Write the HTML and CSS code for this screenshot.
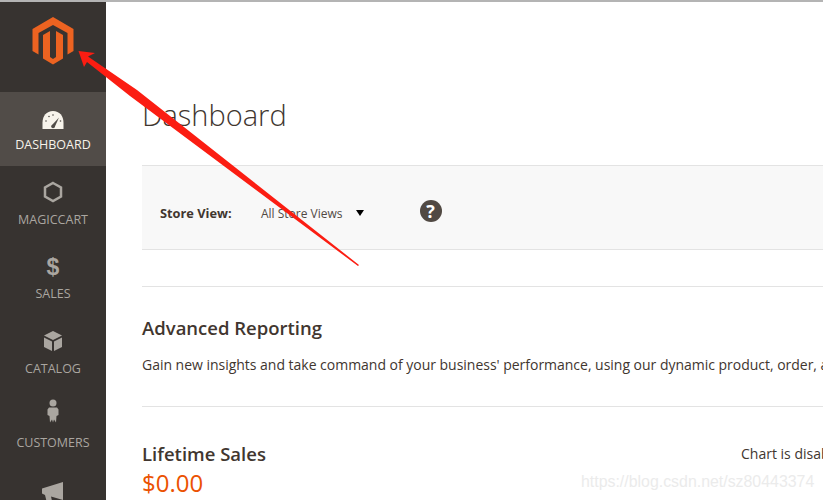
FILE: index.html
```html
<!DOCTYPE html>
<html lang="en">
<head>
<meta charset="utf-8">
<title>Dashboard</title>
<link rel="stylesheet" href="styles.css">
</head>
<body>
<div class="page">
  <aside class="sidebar">
    <div class="logo">
      <svg width="46" height="52" viewBox="30 15 46 52"><path class="logo-mark" d="M53 17 73.500 29V51L67.500 54.500V33L53 25 38.500 33V54.500L32.500 51V29Z"/><path class="logo-mark" d="M43 35 50 31V57L53 59 56 57V31L63 35V58.500L53 64.500 43 58.500Z"/></svg>
    </div>
    <nav class="nav">
      <a class="nav-item active">
        <svg class="nav-icon" width="24" height="24" viewBox="0 0 24 24"><path d="M12 5C5.500 5 1.500 10 1.500 16.500V23H22.500V16.500C22.500 10 18.500 5 12 5Z"/><path class="needle" d="M18 11.500 10.500 19.500 13.500 21.500Z"/><circle class="needle" cx="12" cy="20.500" r="1.800"/><circle class="needle" cx="5" cy="15" r=".8"/><circle class="needle" cx="8" cy="10.500" r=".8"/><circle class="needle" cx="12" cy="9" r=".8"/><circle class="needle" cx="19.500" cy="15" r=".8"/></svg>
        <span>Dashboard</span>
      </a>
      <a class="nav-item">
        <svg class="nav-icon" width="24" height="24" viewBox="0 0 24 24"><path class="hex" d="M12 3 20 7.500V16.500L12 21 4 16.500V7.500Z"/></svg>
        <span>MagicCart</span>
      </a>
      <a class="nav-item">
        <svg class="nav-icon" width="24" height="24" viewBox="0 0 24 24"><text class="dollar" x="12" y="20" text-anchor="middle">$</text></svg>
        <span>Sales</span>
      </a>
      <a class="nav-item">
        <svg class="nav-icon" width="24" height="24" viewBox="0 0 24 24"><path d="M12 2 21 6.500 12 11 3 6.500Z"/><path d="M3 8.500 11 12.500V22L3 18Z"/><path d="M21 8.500 13 12.500V22L21 18Z"/></svg>
        <span>Catalog</span>
      </a>
      <a class="nav-item">
        <svg class="nav-icon shift-up" width="24" height="24" viewBox="0 5.600 24 24"><circle cx="12" cy="4.500" r="3.500"/><path d="M8 9H16L17.500 11V16.500L15.500 17.500 15 24 13 21 12 24 11 21 9 24 8.500 17.500 6.500 16.500V11Z"/></svg>
        <span>Customers</span>
      </a>
      <a class="nav-item">
        <svg class="nav-icon" width="24" height="24" viewBox="0 -2 24 24"><path d="M22 2V20L10 16.500 11.500 23H6L4 15 1 13.500V8.500Z"/></svg>
        <span>Marketing</span>
      </a>
    </nav>
  </aside>
  <main class="main">
    <h1 class="title">Dashboard</h1>
    <section class="store-bar">
      <strong class="store-label">Store View:</strong>
      <span class="store-value">All Store Views</span>
      <span class="caret"></span>
      <span class="help">?</span>
    </section>
    <hr class="rule rule-report">
    <section class="report">
      <h2 class="heading">Advanced Reporting</h2>
      <p class="report-text">Gain new insights and take command of your business' performance, using our dynamic product, order, and customer reports tailored to your customer data.</p>
    </section>
    <hr class="rule">
    <section class="sales">
      <div class="sales-total">
        <h2 class="heading">Lifetime Sales</h2>
        <div class="amount">$0.00</div>
      </div>
      <p class="chart-note">Chart is disabled. To enable the chart, click here.</p>
    </section>
  </main>
</div>
<div class="watermark">https://blog.csdn.net/sz80443374</div>
<svg class="arrow" width="823" height="500" viewBox="0 0 823 500"><path d="M78.500 51 95 53 88 56.500 137 90 359 265 358 266 130 96 87 62 84 67Z"/></svg>
</body>
</html>
```

FILE: styles.css
```css
* { box-sizing: border-box; }
html, body { margin: 0; height: 100%; overflow: hidden; background: #fff; }
body { font-family: "Open Sans", sans-serif; color: #41362f; border-top: 2px solid #b4b4b4; }

.page { display: flex; height: 498px; overflow: hidden; }

.sidebar { flex: 0 0 106px; background: #373330; color: #aaa6a0; overflow: hidden; }
.logo { height: 90px; display: flex; justify-content: center; padding-top: 13px; }
.logo-mark { fill: #ec6321; }

.nav-item { height: 74.4px; display: flex; flex-direction: column; align-items: center; padding-top: 14px; font-size: 12.500px; line-height: 16px; text-transform: uppercase; }
.nav-item span { margin-top: 7.400px; }
.nav-item.active { background: #514c48; color: #f7f3eb; }
.nav-icon { display: block; fill: #aaa6a0; flex: none; }
.shift-up { overflow: visible; }
.active .nav-icon { fill: #f7f3eb; }
.nav-item.active .needle { fill: #514c48; }
.hex { fill: none; stroke: #aaa6a0; stroke-width: 2.500; }
.dollar { font-family: "Liberation Sans", sans-serif; font-weight: 700; font-size: 23px; }

.main { flex: 1; min-width: 0; padding: 0 0 0 36px; overflow: hidden; }
.title { margin: 93px 0 0; font-size: 29px; line-height: 40px; font-weight: 300; color: #41362f; }

.store-bar { margin-top: 30px; height: 85px; display: flex; align-items: center; background: #f8f8f8; border-top: 1px solid #e3e3e3; border-bottom: 1px solid #e3e3e3; padding: 11px 0 0 18px; font-size: 12px; }
.store-label { font-size: 12.800px; font-weight: 700; width: 101px; }
.store-value { color: #514943; }
.caret { margin-left: 13px; border-left: 4.500px solid transparent; border-right: 4.500px solid transparent; border-top: 6px solid #000; }
.help { margin-left: 56px; margin-top: -5px; width: 22px; height: 22px; border-radius: 50%; background: #514943; color: #fff; font-size: 18px; font-weight: 700; line-height: 22px; text-align: center; }

.rule { margin: 0; border: 0; border-top: 1px solid #e3e3e3; }
.rule-report { margin-top: 36px; }

.report { height: 119px; padding-top: 28px; }
.heading { margin: 0; font-size: 18.500px; line-height: 26px; font-weight: 600; color: #41362f; }
.report-text { margin: 14px 0 0; font-size: 14px; line-height: 20px; letter-spacing: -0.02px; white-space: nowrap; }

.sales { display: flex; padding-top: 34px; }
.sales-total { flex: 0 0 599px; }
.amount { font-size: 24px; line-height: 32px; color: #eb5202; }
.chart-note { margin: 3px 0 0; font-size: 14px; line-height: 20px; white-space: nowrap; }

.watermark { position: absolute; left: 581px; top: 473px; font-family: "Liberation Sans", sans-serif; font-size: 15.900px; line-height: 18px; color: #ebebeb; white-space: nowrap; }
.arrow { position: absolute; left: 0; top: 0; pointer-events: none; }
.arrow path { fill: #fb1d12; }
```
